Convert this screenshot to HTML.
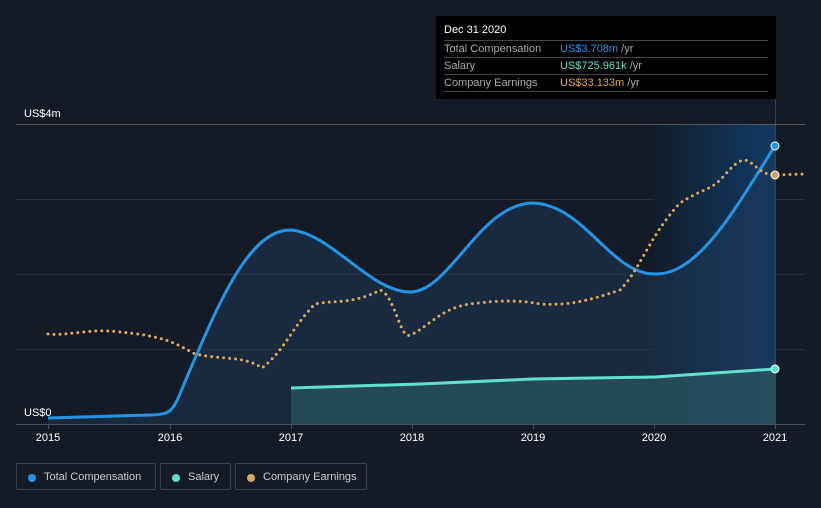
<!DOCTYPE html>
<html><head><style>
body{margin:0;width:821px;height:508px;background:#151b26;font-family:"Liberation Sans",sans-serif;overflow:hidden;position:relative}
.tt{position:absolute;left:436px;top:16px;width:340px;height:83px;background:#000;color:#fff;font-size:11px}
.tt .r{position:absolute;left:8px;width:324px;border-top:1px solid #444;height:16px;line-height:16px;color:#aaa}
.tt .r span{position:absolute;left:116px}
.lg{position:absolute;top:463px;height:27px;border:1px solid #3b414d;border-radius:2px;color:#ccc;font-size:11px;line-height:27px;box-sizing:border-box}
.lg i{position:absolute;left:11px;top:10px;width:8px;height:8px;border-radius:50%}
.lg b{font-weight:normal;position:absolute;left:27px}
</style></head><body>
<svg width="821" height="508" style="position:absolute;left:0;top:0">
<defs><linearGradient id="h" x1="0" x2="1"><stop offset="0" stop-color="#121c2c"/><stop offset="1" stop-color="#123a64"/></linearGradient></defs>
<g stroke="#2a303b" stroke-width="1">
<line x1="16" y1="199.5" x2="805" y2="199.5"/>
<line x1="16" y1="274.5" x2="805" y2="274.5"/>
<line x1="16" y1="349.5" x2="805" y2="349.5"/>
</g>
<rect x="654" y="124" width="121" height="300" fill="url(#h)"/>
<line x1="775.5" y1="99" x2="775.5" y2="424" stroke="#26466d"/>
<line x1="16" y1="124.5" x2="805" y2="124.5" stroke="#555"/>
<path d="M48,418 L150,415 C175,414 172,412 190,370 C220,300 250,230 290,230 C330,232 370,292 410,292 C450,292 480,203 533,203 C585,205 610,274 655,274 C700,276 740,200 775,146 L775,424 L48,424Z" fill="#1d3a55" opacity="0.5"/>
<path d="M291,388 L420,384 L533,379 L655,377 L775,369 L775,424 L291,424Z" fill="#2a5560" opacity="0.75"/>
<path d="M48,418 L150,415 C175,414 172,412 190,370 C220,300 250,230 290,230 C330,232 370,292 410,292 C450,292 480,203 533,203 C585,205 610,274 655,274 C700,276 740,200 775,146" fill="none" stroke="#2394e6" stroke-width="3"/>
<path d="M291,388 L420,384 L533,379 L655,377 L775,369" fill="none" stroke="#5fe0d0" stroke-width="3"/>
<path d="M48,334 C70,336 90,328 120,332 C160,336 170,340 195,354 C225,360 245,356 262,368 C285,350 290,330 315,304 C335,300 355,304 380,290 C395,295 400,340 410,335 C425,330 440,308 470,304 C500,300 520,300 540,304 C570,306 590,300 620,290 C640,270 650,235 680,203 C700,190 710,190 720,180 C730,170 740,155 750,162 C760,170 765,175 775,175 L805,174" fill="none" stroke="#e0a95a" stroke-width="3" stroke-dasharray="0,6" stroke-linecap="round"/>
<line x1="16" y1="424.5" x2="805" y2="424.5" stroke="#4a505a"/>
<g stroke="#4a505a"><line x1="48.5" y1="424" x2="48.5" y2="429"/><line x1="170.5" y1="424" x2="170.5" y2="429"/><line x1="291.5" y1="424" x2="291.5" y2="429"/><line x1="412.5" y1="424" x2="412.5" y2="429"/><line x1="533.5" y1="424" x2="533.5" y2="429"/><line x1="654.5" y1="424" x2="654.5" y2="429"/><line x1="775.5" y1="424" x2="775.5" y2="429"/></g>
<circle cx="775" cy="146" r="4" fill="#2394e6" stroke="#fff" stroke-width="1"/>
<circle cx="775" cy="369" r="4" fill="#5fe0d0" stroke="#fff" stroke-width="1"/>
<circle cx="775" cy="175" r="4" fill="#d4a45e" stroke="#fff" stroke-width="1"/>
<g fill="#fff" font-size="11" font-family="Liberation Sans,sans-serif">
<text x="24" y="117">US$4m</text><text x="24" y="416">US$0</text>
<g text-anchor="middle"><text x="48" y="441">2015</text><text x="170" y="441">2016</text><text x="291" y="441">2017</text><text x="412" y="441">2018</text><text x="533" y="441">2019</text><text x="654" y="441">2020</text><text x="775" y="441">2021</text></g>
</g>
</svg>
<div class="tt">
<div style="position:absolute;left:8px;top:8px;font-size:11px">Dec 31 2020</div>
<div class="r" style="top:24px">Total Compensation<span><span style="position:static;color:#2394e6">US$3.708m</span> /yr</span></div>
<div class="r" style="top:41px">Salary<span><span style="position:static;color:#5fe0d0">US$725.961k</span> /yr</span></div>
<div class="r" style="top:58px;border-bottom:1px solid #444">Company Earnings<span><span style="position:static;color:#e0a95a">US$33.133m</span> /yr</span></div>
</div>
<div class="lg" style="left:16px;width:140px"><i style="background:#2394e6"></i><b>Total Compensation</b></div>
<div class="lg" style="left:160px;width:71px"><i style="background:#5fe0d0"></i><b>Salary</b></div>
<div class="lg" style="left:235px;width:132px"><i style="background:#e0a95a"></i><b>Company Earnings</b></div>
</body></html>
